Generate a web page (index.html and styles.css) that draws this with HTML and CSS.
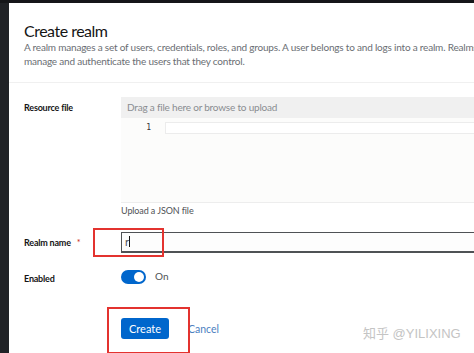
FILE: index.html
```html
<!DOCTYPE html>
<html lang="en">
<head>
    <meta charset="UTF-8">
    <meta name="viewport" content="width=device-width, initial-scale=1.0">
    <title>Create realm</title>
    <link rel="stylesheet" href="styles.css">
</head>
<body>
    <div class="shell">
        <aside class="sidebar"></aside>

        <main class="modal">
            <header class="modal-header">
                <h1>Create realm</h1>
                <p>A realm manages a set of users, credentials, roles, and groups. A user belongs to and logs into a realm. Realms
                    manage and authenticate the users that they control.</p>
            </header>

            <form class="modal-body">
                <div class="form-row">
                    <label class="form-label">Resource file</label>
                    <div class="form-control">
                        <div class="file-upload">
                            <div class="file-drop">Drag a file here or browse to upload</div>
                            <div class="editor">
                                <span class="line-number">1</span>
                                <span class="line-current"></span>
                            </div>
                        </div>
                        <div class="helper">Upload a JSON file</div>
                    </div>
                </div>

                <div class="form-row">
                    <label class="form-label" for="realm">Realm name <span class="required">*</span></label>
                    <div class="form-control">
                        <div class="text-input">r<span class="caret"></span></div>
                    </div>
                </div>

                <div class="form-row row-switch">
                    <label class="form-label">Enabled</label>
                    <div class="form-control switch-wrap">
                        <span class="switch"><span class="knob"></span></span>
                        <span class="switch-text">On</span>
                    </div>
                </div>

                <div class="actions">
                    <button type="button" class="btn-primary">Create</button>
                    <button type="button" class="btn-link">Cancel</button>
                </div>
            </form>
        </main>
    </div>

    <!-- marcas rojas de la captura -->
    <div class="mark mark-name"></div>
    <div class="mark mark-create"></div>
    <div class="watermark">知乎 @YILIXING</div>
</body>
</html>
```

FILE: styles.css
```css
* {
    margin: 0;
    padding: 0;
    box-sizing: border-box;
}

body {
    height: 100vh;
    background-color: #151619;
    font-family: 'Lato', 'Liberation Sans', sans-serif;
    color: #151515;
    overflow: hidden;
    position: relative;
}

.shell {
    display: flex;
    padding-top: 3px;
    height: 100%;
}

.sidebar {
    width: 9px;
    flex-shrink: 0;
    background-color: #202226;
}

.modal {
    width: 640px;
    flex-shrink: 0;
    background: #ffffff;
}

.modal-header {
    padding: 19px 15px 14px;
    border-bottom: 1px solid #f0f0f0;
}

.modal-header h1 {
    font-size: 16px;
    font-weight: normal;
    letter-spacing: -0.5px;
    line-height: 18px;
    color: #151515;
}

.modal-header p {
    width: 460px;
    font-size: 10px;
    letter-spacing: -0.2px;
    line-height: 14px;
    color: #6a6e73;
}

.modal-body {
    padding: 14px 15px 0;
}

.form-row {
    display: flex;
    margin-bottom: 14px;
}

.form-label {
    width: 97px;
    flex-shrink: 0;
    font-size: 9px;
    font-weight: bold;
    letter-spacing: -0.2px;
    line-height: 21px;
}

.required {
    color: #c9190b;
    margin-left: 4px;
    font-weight: normal;
}

.form-control {
    flex: 1;
}

.file-upload {
    background: #fcfcfb;
}

.file-drop {
    height: 21px;
    line-height: 21px;
    padding-left: 6px;
    background-color: #f0f0f0;
    color: #8a8d90;
    font-size: 10px;
    letter-spacing: -0.2px;
}

.editor {
    display: flex;
    height: 85px;
    padding-top: 4px;
    border-bottom: 1px solid #ededed;
}

.line-number {
    width: 44px;
    text-align: right;
    padding-right: 14px;
    font-family: 'DejaVu Sans Mono', monospace;
    font-size: 8px;
    line-height: 12px;
    color: #333;
}

.line-current {
    flex: 1;
    height: 12px;
    border: 1px solid #ececec;
    background: #ffffff;
}

.helper {
    font-size: 9px;
    letter-spacing: -0.1px;
    line-height: 14px;
    color: #4f5255;
    margin-top: 1px;
}

.text-input {
    height: 21px;
    border: 1px solid #4f5255;
    border-bottom-width: 2px;
    background: #fdfdfd;
    padding-left: 3px;
    font-size: 11px;
    line-height: 18px;
    color: #4f5255;
}

.caret {
    display: inline-block;
    width: 1px;
    height: 11px;
    background: #151515;
    vertical-align: -1px;
}

.row-switch .form-label {
    line-height: 20px;
    padding-top: 2px;
}

.switch-wrap {
    display: flex;
    align-items: center;
    gap: 9px;
    height: 20px;
}

.switch {
    position: relative;
    width: 25px;
    height: 14px;
    border-radius: 7px;
    background-color: #0066cc;
}

.switch .knob {
    position: absolute;
    top: 2px;
    right: 2px;
    width: 10px;
    height: 10px;
    border-radius: 50%;
    background: #ffffff;
}

.switch-text {
    font-size: 10px;
    color: #4f5255;
    margin-top: -3px;
}

.actions {
    display: flex;
    align-items: center;
    gap: 19px;
    padding: 15px 0 0 97px;
}

.btn-primary {
    width: 48px;
    height: 21px;
    border: none;
    border-radius: 3px;
    background-color: #0066cc;
    color: #ffffff;
    font-family: inherit;
    font-size: 11px;
}

.btn-link {
    border: none;
    background: transparent;
    color: #4d7fbf;
    font-family: inherit;
    font-size: 10.5px;
}

/* anotaciones en rojo */
.mark {
    position: absolute;
    border: 2px solid #e3332f;
}

.mark-name {
    left: 93px;
    top: 228px;
    width: 71px;
    height: 29px;
}

.mark-create {
    left: 107px;
    top: 307px;
    width: 83px;
    height: 47px;
}

.watermark {
    position: absolute;
    left: 363px;
    top: 323px;
    font-family: 'Liberation Sans', 'Noto Sans CJK SC', sans-serif;
    font-size: 13px;
    color: #c4c4c4;
    text-shadow: 0 0 1px #ffffff;
}
```
